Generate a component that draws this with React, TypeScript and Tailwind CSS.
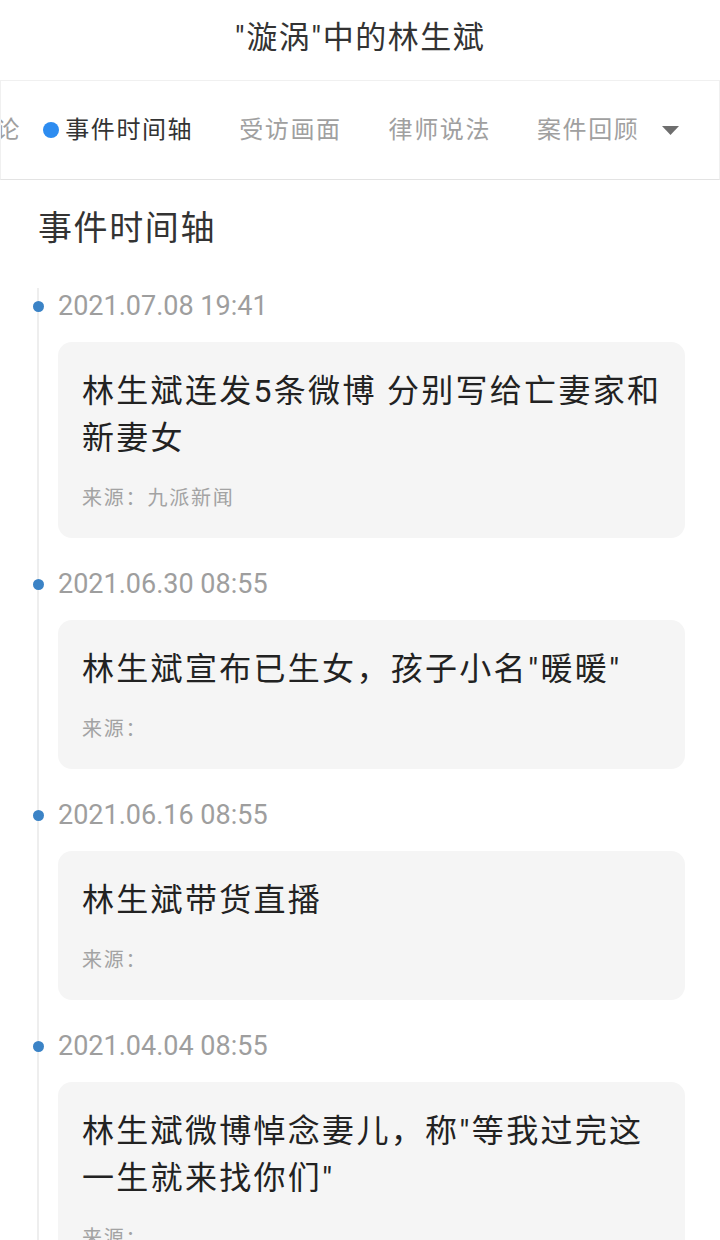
import React from 'react';

const font = { fontFamily: 'Roboto, "Noto Sans CJK SC", sans-serif' };

interface TimelineEvent {
  time: string;
  title: string;
  source: string;
}

const events: TimelineEvent[] = [
  { time: '2021.07.08 19:41', title: '林生斌连发5条微博 分别写给亡妻家和新妻女', source: '九派新闻' },
  { time: '2021.06.30 08:55', title: '林生斌宣布已生女，孩子小名"暖暖"', source: '' },
  { time: '2021.06.16 08:55', title: '林生斌带货直播', source: '' },
  { time: '2021.04.04 08:55', title: '林生斌微博悼念妻儿，称"等我过完这一生就来找你们"', source: '' },
];

function TabBar() {
  return (
    <div className="relative h-[100px] overflow-hidden border border-[#f0f0f0] border-b-[#e3e3e3] bg-white">
      <div className="flex h-full items-center whitespace-nowrap text-[24px] tracking-[1.6px] text-[#a0a0a0]">
        <span className="-ml-[31px] shrink-0">评论</span>
        <span className="ml-[22px] h-4 w-4 shrink-0 rounded-full bg-[#2d8cf0]" />
        <span className="ml-[6px] shrink-0 text-[#333]">事件时间轴</span>
        <span className="ml-[46px] shrink-0">受访画面</span>
        <span className="ml-[47px] shrink-0">律师说法</span>
        <span className="ml-[46px] shrink-0">案件回顾</span>
      </div>
      <div className="absolute top-0 right-0 bottom-0 flex w-[72px] items-center bg-white pl-[15px] shadow-[-6px_0_8px_rgba(255,255,255,0.9)]">
        <svg width="17" height="9" viewBox="0 0 17 9">
          <path d="M0 0 H17 L8.5 9 Z" fill="#6e6e6e" />
        </svg>
      </div>
    </div>
  );
}

function EventItem({ event, first }: { event: TimelineEvent; first: boolean }) {
  return (
    <div className={`relative pl-[19px] ${first ? '' : 'mt-[28px]'}`}>
      <span className="absolute top-[12.5px] -left-[6.5px] h-[11px] w-[11px] rounded-full bg-[#3b83c6]" />
      <div className="text-[27px] leading-[36px] text-[#9e9e9e]">{event.time}</div>
      <div className="mt-[18px] mr-[35px] rounded-[14px] bg-[#f5f5f5] pt-[26px] pr-[20px] pb-[25px] pl-[24px]">
        <div className="text-[32px] leading-[47px] tracking-[2.3px] text-[#222]">{event.title}</div>
        <div className="mt-[21px] text-[20px] leading-[30px] tracking-[1.8px] text-[#a3a3a3]">
          来源：{event.source}
        </div>
      </div>
    </div>
  );
}

export default function App() {
  return (
    <div className="min-h-[1240px] w-[720px] overflow-hidden bg-white" style={font}>
      <div className="flex h-[80px] items-center justify-center pb-[4px] text-[31px] tracking-[1.5px] text-[#333]">
        "漩涡"中的林生斌
      </div>
      <TabBar />
      <h2 className="mt-[24px] pl-[38px] text-[34px] leading-[48px] tracking-[1.6px] text-[#333]">事件时间轴</h2>
      <div className="mt-[36px] ml-[37px] border-l-2 border-[#eeeeee] pb-10">
        {events.map((e, i) => (
          <EventItem key={e.time} event={e} first={i === 0} />
        ))}
      </div>
    </div>
  );
}
